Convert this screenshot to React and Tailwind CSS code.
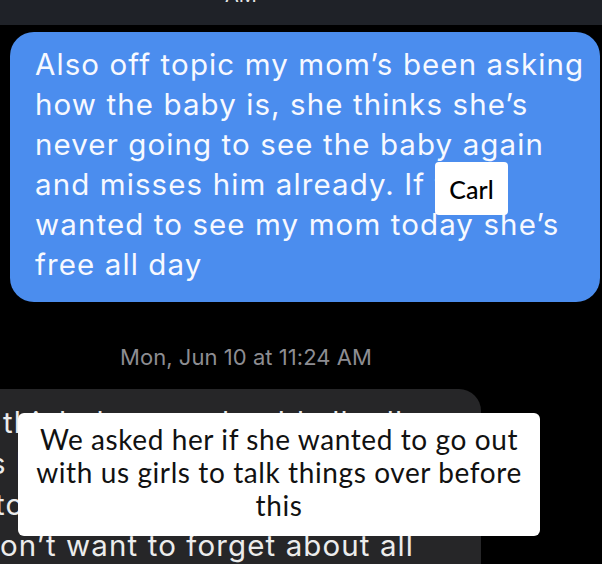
export default function App() {
  return (
    <div className="relative w-[602px] h-[564px] overflow-hidden bg-black font-['Inter',sans-serif]">
      {/* header strip, cut off at the top */}
      <div className="h-[25px] bg-[#1f2228] overflow-hidden">
        <div className="ml-[225px] -mt-[15px] text-[20px] leading-[20px] text-[#e6e6e6]">AM</div>
      </div>

      {/* outgoing blue bubble */}
      <div className="relative mt-[7px] ml-[10px] w-[590px] h-[270px] rounded-[24px] bg-[#4b8dee] pl-[25px] pt-[12px] text-[29.5px] leading-[40px] tracking-[1.1px] text-[#f7f9ff] whitespace-nowrap">
        Also off topic my mom’s been asking
        <br />
        how the baby is, she thinks she’s
        <br />
        never going to see the baby again
        <br />
        and misses him already. If they
        <br />
        wanted to see my mom today she’s
        <br />
        free all day
        <div className="absolute left-[425px] top-[130px] w-[73px] h-[53px] rounded-[4px] bg-white flex items-center justify-center font-['Lato',sans-serif] text-[25px] font-medium tracking-normal text-black">
          Carl
        </div>
      </div>

      <div className="mt-[45px] ml-[120px] text-[22px] leading-[21px] tracking-[0.05px] text-[#8d8d92]">
        Mon, Jun 10 at 11:24 AM
      </div>

      {/* incoming gray bubble, runs off the left edge */}
      <div className="mt-[21px] -ml-[20px] w-[501px] h-[220px] rounded-[22px] bg-[#262628] pt-[13px] text-[29.5px] leading-[41px] tracking-[1.1px] text-[#ececec] whitespace-nowrap">
        <div className="ml-[23px]">think that we should all talk</div>
        <div className="ml-[10px]">s I feel like we need to sit</div>
        <div className="ml-[15px]">to talk about it because I</div>
        <div className="ml-[20px]">on’t want to forget about all</div>
      </div>

      {/* caption overlay */}
      <div className="absolute left-[18px] top-[413px] w-[522px] h-[123px] rounded-[6px] bg-white pt-[10px] text-center font-['Lato',sans-serif] text-[28px] leading-[33px] tracking-[0.6px] text-[#111]">
        We asked her if she wanted to go out
        <br />
        with us girls to talk things over before
        <br />
        this
      </div>
    </div>
  );
}
